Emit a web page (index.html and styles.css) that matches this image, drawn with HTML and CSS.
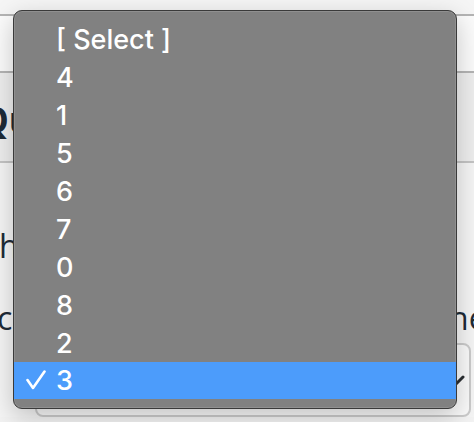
FILE: index.html
```html
<!DOCTYPE html>
<html>
<head>
<meta charset="utf-8">
<link rel="stylesheet" href="styles.css">
</head>
<body>
<div class="page">
  <div class="topstrip"></div>
  <div class="band"></div>
  <div class="modal-header"><h2 class="title">Quantity</h2></div>
  <div class="modal-body">
    <p class="line line-a">how many items ship</p>
    <div class="line line-b"><span class="lead">choose the amount</span><span class="tail">next</span></div>
    <div class="select-box">
      <span class="select-value">3</span>
      <svg class="chevron" width="20" height="12" viewBox="0 0 20 12"><polyline points="2,2 10,10 18,2" fill="none" stroke="#2b2f33" stroke-width="3" stroke-linecap="round" stroke-linejoin="round"/></svg>
    </div>
  </div>
</div>

<div class="menu">
  <div class="item">[ Select ]</div>
  <div class="item">4</div>
  <div class="item">1</div>
  <div class="item">5</div>
  <div class="item">6</div>
  <div class="item">7</div>
  <div class="item">0</div>
  <div class="item">8</div>
  <div class="item">2</div>
  <div class="item selected">
    <svg class="check" width="20" height="20" viewBox="0 0 20 20"><polyline points="1.5,10 7,18 18.5,1.5" fill="none" stroke="#ffffff" stroke-width="2.6" stroke-linecap="round" stroke-linejoin="round"/></svg>
    3
  </div>
</div>
</body>
</html>
```

FILE: styles.css
```css
html, body {
  margin: 0;
  padding: 0;
}
body {
  width: 474px;
  height: 422px;
  overflow: hidden;
  background: #f3f3f3;
  font-family: "Open Sans", "Liberation Sans", sans-serif;
  position: relative;
}
.page {
  display: flex;
  flex-direction: column;
}
.topstrip {
  height: 14px;
  background: #f5f5f5;
  border-bottom: 2px solid #b4b4b4;
}
.band {
  height: 55px;
  background: #fbfbfb;
  border-bottom: 2px solid #b4b4b4;
}
.modal-header {
  height: 88px;
  background: #eeeeee;
  border-bottom: 2px solid #c4c4c4;
  display: flex;
  align-items: center;
}
.title {
  margin: 6px 0 0 -19px;
  font-size: 35px;
  line-height: 40px;
  font-weight: 700;
  color: #1e2b37;
  white-space: nowrap;
}
.modal-body {
  background: #f5f5f5;
  padding: 63px 3px 0 0;
  display: flex;
  flex-direction: column;
}
.line {
  margin: 0;
  font-size: 32px;
  line-height: 40px;
  height: 40px;
  color: #1e2b37;
  white-space: nowrap;
}
.line-a {
  margin-left: -1px;
}
.line-b {
  margin: 32px 0 0 -3px;
  display: flex;
}
.lead {
  flex: 0 0 452px;
  overflow: hidden;
}
.tail {
  flex: 0 0 auto;
}
.select-box {
  margin: 5px 0 0 35px;
  height: 70px;
  border: 2px solid #cbcbcb;
  border-radius: 8px;
  background: #fafafa;
  display: flex;
  align-items: center;
  justify-content: space-between;
  padding: 0 4px 0 20px;
}
.select-value {
  font-size: 26px;
  color: #1e2b37;
}
.chevron {
  margin-top: 2px;
}
.menu {
  position: absolute;
  left: 13px;
  top: 10px;
  width: 442px;
  height: 388px;
  box-sizing: content-box;
  background: #818181;
  border: 1px solid #3a3a3a;
  border-radius: 9px;
  box-shadow: 0 8px 26px rgba(0, 0, 0, 0.22), inset 0 0 0 1px rgba(255, 255, 255, 0.12);
  overflow: hidden;
  display: flex;
  flex-direction: column;
  padding-top: 9px;
  font-family: "Inter", "Noto Sans", sans-serif;
}
.item {
  height: 38px;
  flex: 0 0 38px;
  display: flex;
  align-items: center;
  padding-left: 42px;
  font-size: 27px;
  font-weight: 500;
  color: #ffffff;
  position: relative;
}
.item.selected {
  background: #4c9cfb;
  height: 37px;
  flex: 0 0 37px;
}
.check {
  position: absolute;
  left: 12px;
  top: 8px;
}
```
